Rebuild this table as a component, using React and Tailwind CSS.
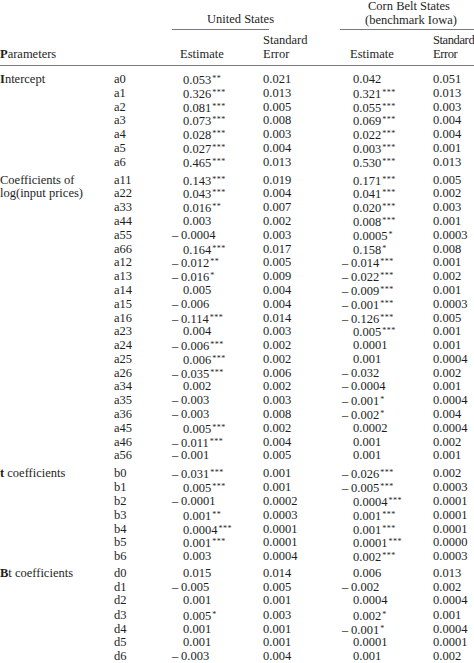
const groups = [
  {
    label: [<><span className="font-bold">I</span>ntercept</>],
    rows: [
      ["a0", "0.053", "**", "0.021", "0.042", "", "0.051"],
      ["a1", "0.326", "***", "0.013", "0.321", "***", "0.013"],
      ["a2", "0.081", "***", "0.005", "0.055", "***", "0.003"],
      ["a3", "0.073", "***", "0.008", "0.069", "***", "0.004"],
      ["a4", "0.028", "***", "0.003", "0.022", "***", "0.004"],
      ["a5", "0.027", "***", "0.004", "0.003", "***", "0.001"],
      ["a6", "0.465", "***", "0.013", "0.530", "***", "0.013"],
    ],
  },
  {
    label: ["Coefficients of", "log(input prices)"],
    rows: [
      ["a11", "0.143", "***", "0.019", "0.171", "***", "0.005"],
      ["a22", "0.043", "***", "0.004", "0.041", "***", "0.002"],
      ["a33", "0.016", "**", "0.007", "0.020", "***", "0.003"],
      ["a44", "0.003", "", "0.002", "0.008", "***", "0.001"],
      ["a55", "-0.0004", "", "0.003", "0.0005", "*", "0.0003"],
      ["a66", "0.164", "***", "0.017", "0.158", "*", "0.008"],
      ["a12", "-0.012", "**", "0.005", "-0.014", "***", "0.001"],
      ["a13", "-0.016", "*", "0.009", "-0.022", "***", "0.002"],
      ["a14", "0.005", "", "0.004", "-0.009", "***", "0.001"],
      ["a15", "-0.006", "", "0.004", "-0.001", "***", "0.0003"],
      ["a16", "-0.114", "***", "0.014", "-0.126", "***", "0.005"],
      ["a23", "0.004", "", "0.003", "0.005", "***", "0.001"],
      ["a24", "-0.006", "***", "0.002", "0.0001", "", "0.001"],
      ["a25", "0.006", "***", "0.002", "0.001", "", "0.0004"],
      ["a26", "-0.035", "***", "0.006", "-0.032", "", "0.002"],
      ["a34", "0.002", "", "0.002", "-0.0004", "", "0.001"],
      ["a35", "-0.003", "", "0.003", "-0.001", "*", "0.0004"],
      ["a36", "-0.003", "", "0.008", "-0.002", "*", "0.004"],
      ["a45", "0.005", "***", "0.002", "0.0002", "", "0.0004"],
      ["a46", "-0.011", "***", "0.004", "0.001", "", "0.002"],
      ["a56", "-0.001", "", "0.005", "0.001", "", "0.001"],
    ],
  },
  {
    label: [<><span className="font-bold">t</span> coefficients</>],
    rows: [
      ["b0", "-0.031", "***", "0.001", "-0.026", "***", "0.002"],
      ["b1", "0.005", "***", "0.001", "-0.005", "***", "0.0003"],
      ["b2", "-0.0001", "", "0.0002", "0.0004", "***", "0.0001"],
      ["b3", "0.001", "**", "0.0003", "0.001", "***", "0.0001"],
      ["b4", "0.0004", "***", "0.0001", "0.001", "***", "0.0001"],
      ["b5", "0.001", "***", "0.0001", "0.0001", "***", "0.0000"],
      ["b6", "0.003", "", "0.0004", "0.002", "***", "0.0003"],
    ],
  },
  {
    label: [<><span className="font-bold">B</span>t coefficients</>],
    rows: [
      ["d0", "0.015", "", "0.014", "0.006", "", "0.013"],
      ["d1", "-0.005", "", "0.005", "-0.002", "", "0.002"],
      ["d2", "0.001", "", "0.001", "0.0004", "", "0.0004"],
      ["d3", "0.005", "*", "0.003", "0.002", "*", "0.001"],
      ["d4", "0.001", "", "0.001", "-0.001", "*", "0.0004"],
      ["d5", "0.001", "", "0.001", "0.0001", "", "0.0001"],
      ["d6", "-0.003", "", "0.004", "0.001", "", "0.002"],
    ],
  },
];

const cols = "grid grid-cols-[114px_56px_93px_77px_93px_41px]";

function Est({ v, stars }) {
  const neg = v.startsWith("-");
  return (
    <div className={neg ? "pl-[2px] whitespace-nowrap" : "pl-[13px] whitespace-nowrap"}>
      {neg && <span className="inline-block w-[9px]">–</span>}
      {neg ? v.slice(1) : v}
      {stars && <span className="text-[8px] align-[3px] tracking-[0.5px] ml-[1px]">{stars}</span>}
    </div>
  );
}

export default function App() {
  return (
    <div className="w-[474px] h-[663px] overflow-hidden bg-white text-[#1e1e1e] text-[12.5px] leading-[13.5px]" style={{ fontFamily: '"Liberation Serif", "DejaVu Serif", serif' }}>
      {/* spanner heads */}
      <div className="grid grid-cols-[172px_168px_134px]">
        <div />
        <div className="pt-[13px]">
          <div className="pl-[35px] whitespace-nowrap">United States</div>
          <div className="mt-[2px] h-px w-[97px] bg-[#7a7a7a]" />
        </div>
        <div>
          <div className="text-center pl-[4px] whitespace-nowrap">Corn Belt States</div>
          <div className="text-center pl-[8px] whitespace-nowrap">(benchmark Iowa)</div>
          <div className="mt-[2px] h-px bg-[#7a7a7a]" />
        </div>
      </div>

      {/* column heads */}
      <div className={`${cols} mt-[4px]`}>
        <div className="pt-[13.5px]"><span className="font-bold">P</span>arameters</div>
        <div />
        <div className="pt-[13.5px] pl-[10px]">Estimate</div>
        <div>Standard<br />Error</div>
        <div className="pt-[13.5px] pl-[10px]">Estimate</div>
        <div className="whitespace-nowrap tracking-[-0.4px]">Standard<br />Error</div>
      </div>
      <div className="mt-[4px] h-px bg-[#7a7a7a]" />

      <div className="pt-[6px]">
        {groups.map((g, gi) => (
          <div key={gi} className={gi ? "mt-[4px]" : ""}>
            {g.rows.map((r, ri) => (
              <div key={r[0]} className={`${cols} h-[13.8px] leading-[13.8px] items-center`}>
                <div className="whitespace-nowrap">{g.label[ri] || ""}</div>
                <div>{r[0]}</div>
                <Est v={r[1]} stars={r[2]} />
                <div>{r[3]}</div>
                <Est v={r[4]} stars={r[5]} />
                <div>{r[6]}</div>
              </div>
            ))}
          </div>
        ))}
      </div>
    </div>
  );
}
